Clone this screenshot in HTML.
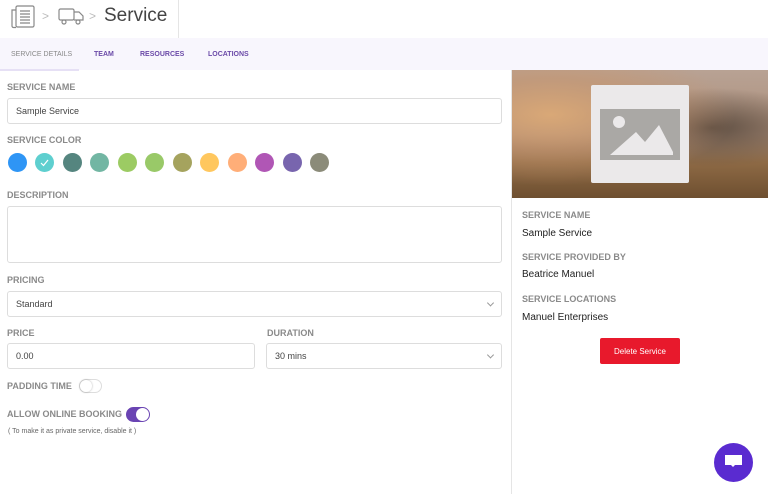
<!DOCTYPE html>
<html><head><style>
*{box-sizing:border-box;margin:0;padding:0}
body{width:768px;height:494px;background:#fff;font-family:"Liberation Sans",sans-serif;position:relative;overflow:hidden;color:#333}
.a{position:absolute}
.lbl{position:absolute;font-size:9px;font-weight:bold;color:#8a8a8a;white-space:nowrap}
.inp{position:absolute;border:1px solid #ddd;border-radius:3px;font-size:9px;color:#444;padding-left:8px;display:flex;align-items:center;background:#fff}
.chev{position:absolute;right:8px;top:50%;width:5px;height:5px;border-right:1px solid #999;border-bottom:1px solid #999;transform:translateY(-70%) rotate(45deg)}
.dot{position:absolute;width:19px;height:19px;border-radius:50%;top:153px}
.tab{position:absolute;top:51px;font-size:7px;font-weight:bold;color:#6b4aa8}
.rl{position:absolute;left:522px;font-size:9px;font-weight:bold;color:#8a8a8a}
.rv{position:absolute;left:522px;font-size:10px;color:#222}
</style></head><body>
<div class="a" style="left:0;top:0;width:768px;height:38px;background:#fff;box-shadow:0 1px 2px rgba(0,0,0,0.06)"></div>
<svg class="a" style="left:10px;top:5px" width="26" height="24" viewBox="0 0 26 24" fill="none" stroke="#888" stroke-width="1.2"><rect x="6" y="1" width="18" height="21" rx="1.5"/><path d="M6 5H2v16a1.5 1.5 0 0 0 1.5 1.5H6"/><path d="M10 6h10M10 9h10M10 12h10M10 15h10M10 18h10"/></svg>
<div class="a" style="left:42px;top:9px;font-size:12px;color:#bbb">&gt;</div>
<svg class="a" style="left:58px;top:6px" width="26" height="20" viewBox="0 0 26 20" fill="none" stroke="#888" stroke-width="1.2"><rect x="1" y="3" width="15" height="11" rx="1.5"/><path d="M16 6h5l4 4v4h-9"/><circle cx="6" cy="16" r="2" fill="#fff"/><circle cx="20" cy="16" r="2" fill="#fff"/></svg>
<div class="a" style="left:89px;top:9px;font-size:12px;color:#bbb">&gt;</div>
<div class="a" style="left:104px;top:5px;font-size:19px;color:#444">Service</div>
<div class="a" style="left:178px;top:0;width:1px;height:38px;background:#e5e5e5"></div>
<div class="a" style="left:0;top:38px;width:768px;height:32px;background:#f8f6fd"></div>
<div class="tab" style="left:11px;color:#888;font-weight:normal">SERVICE DETAILS</div>
<div class="a" style="left:0;top:69px;width:79px;height:2px;background:#e6e0f5"></div>
<div class="tab" style="left:94px">TEAM</div>
<div class="tab" style="left:140px">RESOURCES</div>
<div class="tab" style="left:208px">LOCATIONS</div>
<div class="lbl" style="left:7px;top:82px">SERVICE NAME</div>
<div class="inp" style="left:7px;top:98px;width:495px;height:26px">Sample Service</div>
<div class="lbl" style="left:7px;top:135px">SERVICE COLOR</div>
<div class="dot" style="left:8px;background:#2e95f5"></div>
<div class="dot" style="left:35px;background:#5ecfcf"><svg width="19" height="19"><path d="M6 10l2.5 2.5L13 7" stroke="#fff" stroke-width="1.2" fill="none"/></svg></div>
<div class="dot" style="left:63px;background:#55857f"></div>
<div class="dot" style="left:90px;background:#72b6a3"></div>
<div class="dot" style="left:118px;background:#9ccb63"></div>
<div class="dot" style="left:145px;background:#99c968"></div>
<div class="dot" style="left:173px;background:#a5a35e"></div>
<div class="dot" style="left:200px;background:#ffc75e"></div>
<div class="dot" style="left:228px;background:#ffae78"></div>
<div class="dot" style="left:255px;background:#b056b5"></div>
<div class="dot" style="left:283px;background:#7865ae"></div>
<div class="dot" style="left:310px;background:#8b8b79"></div>
<div class="lbl" style="left:7px;top:190px">DESCRIPTION</div>
<div class="inp" style="left:7px;top:206px;width:495px;height:57px"></div>
<div class="lbl" style="left:7px;top:275px">PRICING</div>
<div class="inp" style="left:7px;top:291px;width:495px;height:26px">Standard<span class="chev"></span></div>
<div class="lbl" style="left:7px;top:328px">PRICE</div>
<div class="inp" style="left:7px;top:343px;width:248px;height:26px">0.00</div>
<div class="lbl" style="left:267px;top:328px">DURATION</div>
<div class="inp" style="left:266px;top:343px;width:236px;height:26px">30 mins<span class="chev"></span></div>
<div class="lbl" style="left:7px;top:381px">PADDING TIME</div>
<div class="a" style="left:79px;top:379px;width:23px;height:14px;border:1px solid #ddd;border-radius:7px;background:#fff"><div class="a" style="left:0;top:0;width:12px;height:12px;border-radius:50%;background:#fff;box-shadow:0 0 2px rgba(0,0,0,0.3)"></div></div>
<div class="lbl" style="left:7px;top:409px">ALLOW ONLINE BOOKING</div>
<div class="a" style="left:126px;top:407px;width:24px;height:15px;border-radius:8px;background:#6a44b3"><div class="a" style="left:10px;top:1px;width:13px;height:13px;border-radius:50%;background:#fff"></div></div>
<div class="a" style="left:8px;top:428px;font-size:7px;color:#666">( To make it as private service, disable it )</div>
<div class="a" style="left:511px;top:70px;width:1px;height:424px;background:#e5e5e5"></div>
<div class="a" style="left:512px;top:70px;width:256px;height:128px;background:radial-gradient(ellipse at 15% 35%,#d9a877 0%,rgba(200,150,110,0.6) 30%,transparent 60%),radial-gradient(ellipse at 78% 45%,#5e4e42 0%,rgba(94,78,66,0.5) 20%,transparent 40%),linear-gradient(180deg,#b8a294 0%,#ad8f7a 50%,#8e6a45 72%,#6e4f30 100%)"></div>
<div class="a" style="left:591px;top:85px;width:98px;height:98px;background:#ebe9ea;border-radius:2px"></div>
<svg class="a" style="left:600px;top:109px" width="80" height="51" viewBox="0 0 80 51"><rect width="80" height="51" fill="#aaa8a5"/><circle cx="19" cy="13" r="6" fill="#ebe9ea"/><path d="M10 46l26-23 9 10 14-17 14 27v3z" fill="#ebe9ea"/></svg>
<div class="rl" style="top:210px">SERVICE NAME</div>
<div class="rv" style="top:228px">Sample Service</div>
<div class="rl" style="top:252px">SERVICE PROVIDED BY</div>
<div class="rv" style="top:269px">Beatrice Manuel</div>
<div class="rl" style="top:294px">SERVICE LOCATIONS</div>
<div class="rv" style="top:312px">Manuel Enterprises</div>
<div class="a" style="left:600px;top:338px;width:80px;height:26px;background:#e8192c;border-radius:2px;color:#fff;font-size:8px;display:flex;align-items:center;justify-content:center">Delete Service</div>
<div class="a" style="left:714px;top:443px;width:39px;height:39px;border-radius:50%;background:#5a2bd0"></div>
<svg class="a" style="left:724px;top:454px" width="20" height="16" viewBox="0 0 20 16"><path d="M1 1h17v10h-7l-2 2-2-2H1z" fill="#fff"/></svg>
</body></html>
